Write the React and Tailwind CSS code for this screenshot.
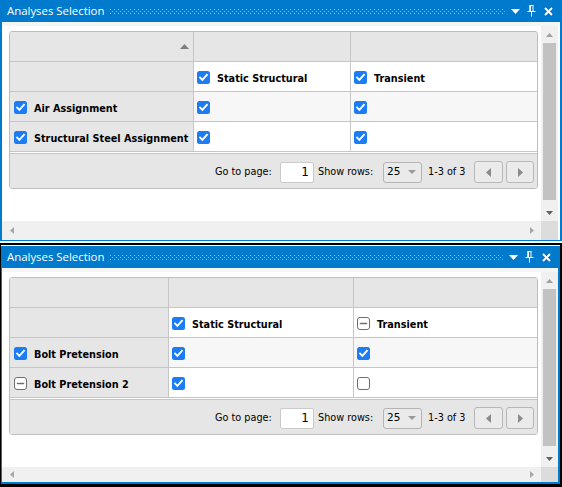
import React from "react";

function Box({ state }) {
  if (state === "on") {
    return (
      <svg width="13" height="13" viewBox="0 0 13 13" className="shrink-0 block">
        <rect x="0" y="0" width="13" height="13" rx="2.5" fill="#1b7cf3" />
        <path d="M3.1 6.6 L5.4 8.9 L9.9 3.9" stroke="#fff" strokeWidth="1.9" fill="none" strokeLinecap="square" />
      </svg>
    );
  }
  if (state === "mixed") {
    return (
      <svg width="13" height="13" viewBox="0 0 13 13" className="shrink-0 block">
        <rect x="0.5" y="0.5" width="12" height="12" rx="2.5" fill="#fff" stroke="#6e6e6e" />
        <path d="M3.5 6.5 H9.5" stroke="#6e6e6e" strokeWidth="1.6" strokeLinecap="round" />
      </svg>
    );
  }
  return (
    <svg width="13" height="13" viewBox="0 0 13 13" className="shrink-0 block">
      <rect x="0.5" y="0.5" width="12" height="12" rx="2.5" fill="#fff" stroke="#6e6e6e" />
    </svg>
  );
}

function TitleBar({ id }) {
  return (
    <div className="h-[22px] bg-[#007acc] flex items-center pl-[5px] pr-[7px]">
      <span className="text-white text-[11.4px] leading-none whitespace-nowrap font-['Open_Sans',sans-serif]">
        Analyses Selection
      </span>
      <div className="flex-1 ml-[6px] mr-[6px] mt-[2px] h-[6px]">
        <svg width="100%" height="6" className="block">
          <defs>
            <pattern id={id} width="4" height="4" patternUnits="userSpaceOnUse">
              <rect x="0" y="0" width="1" height="1" fill="#8cc6f0" />
              <rect x="2" y="2" width="1" height="1" fill="#8cc6f0" />
            </pattern>
          </defs>
          <rect width="100%" height="6" fill={`url(#${id})`} />
        </svg>
      </div>
      <svg width="9" height="5" viewBox="0 0 9 5" className="block mt-[1px]">
        <path d="M0 0 H9 L4.5 5 Z" fill="#fff" />
      </svg>
      <svg width="9" height="12" viewBox="0 0 9 12" className="block ml-[7px]">
        <path d="M2.5 0.5 H6.5 M3 0.5 V6.5 M6 0.5 V6.5 M0.5 6.5 H8.5 M4.5 6.5 V11.5" stroke="#fff" strokeWidth="1" fill="none" />
        <rect x="2.5" y="0.5" width="1.5" height="6" fill="#fff" />
      </svg>
      <svg width="9" height="9" viewBox="0 0 9 9" className="block ml-[8px]">
        <path d="M1 1 L8 8 M8 1 L1 8" stroke="#fff" strokeWidth="1.8" />
      </svg>
    </div>
  );
}

function Grid({ cols, headers, rows, sort }) {
  const cellB = "border-b border-[#c6c6c6]";
  const cellR = "border-r border-[#c6c6c6]";
  return (
    <div className="border border-[#bdbdbd] rounded-[3px] overflow-hidden bg-white font-['DejaVu_Sans',sans-serif] text-black">
      <div className={`grid ${cols}`}>
        <div className={`h-[30px] bg-[#e6e6e6] ${cellB} ${cellR} flex items-center justify-end pr-[4px]`}>
          {sort && (
            <svg width="9" height="5" viewBox="0 0 9 5" className="block">
              <path d="M0 5 H9 L4.5 0 Z" fill="#7f7f7f" />
            </svg>
          )}
        </div>
        <div className={`h-[30px] bg-[#e6e6e6] ${cellB} ${cellR}`} />
        <div className={`h-[30px] bg-[#e6e6e6] ${cellB}`} />
        <div className={`h-[30px] bg-[#e6e6e6] ${cellB} ${cellR}`} />
        {headers.map((h, i) => (
          <div
            key={i}
            className={`h-[30px] bg-white ${cellB} ${i === 0 ? cellR : ""} flex items-center pl-[3px] pt-[1px] gap-[7px]`}
          >
            <Box state={h.state} />
            <span className="text-[9.7px] font-bold whitespace-nowrap pt-[5px]">{h.label}</span>
          </div>
        ))}
        {rows.map((r, ri) => (
          <React.Fragment key={ri}>
            <div className={`h-[30px] bg-[#e6e6e6] ${cellB} ${cellR} flex items-center pl-[4px] pt-[1px] gap-[7px]`}>
              <Box state={r.state} />
              <span className="text-[9.7px] font-bold whitespace-nowrap pt-[5px]">{r.label}</span>
            </div>
            {r.cells.map((c, ci) => (
              <div
                key={ci}
                className={`h-[30px] ${ri === 0 ? "bg-[#f7f7f7]" : "bg-white"} ${cellB} ${ci === 0 ? cellR : ""} flex items-center pl-[3px] pt-[1px]`}
              >
                <Box state={c} />
              </div>
            ))}
          </React.Fragment>
        ))}
      </div>
      <div className="mt-[1px] h-[35px] border-t border-[#c6c6c6] bg-[#e6e6e6] flex items-center justify-end pr-[3px] pt-[2px] text-[9.7px] whitespace-nowrap">
        <span className="w-[59px]">Go to page:</span>
        <div className="ml-[6px] w-[34px] h-[21px] bg-white border border-[#cacaca] rounded-[2px] flex items-center justify-end pr-[4px] text-[12px]">
          1
        </div>
        <span className="ml-[4px] w-[58px]">Show rows:</span>
        <div className="ml-[7px] w-[39px] h-[21px] bg-[#eaeaea] border border-[#b4b4b4] rounded-[3px] flex items-center pl-[3px] text-[10.5px]">
          <span>25</span>
          <svg width="8" height="4" viewBox="0 0 8 4" className="block ml-auto mr-[5px]">
            <path d="M0 0 H8 L4 4 Z" fill="#9a9a9a" />
          </svg>
        </div>
        <span className="ml-[6px] w-[39px]">1-3 of 3</span>
        <div className="ml-[7px] w-[29px] h-[22px] bg-[#ebebeb] border border-[#b8b8b8] rounded-[3px] flex items-center justify-center">
          <svg width="5" height="9" viewBox="0 0 5 9" className="block">
            <path d="M5 0 V9 L0 4.5 Z" fill="#8a8a8a" />
          </svg>
        </div>
        <div className="ml-[3px] w-[28px] h-[22px] bg-[#ebebeb] border border-[#b8b8b8] rounded-[3px] flex items-center justify-center">
          <svg width="5" height="9" viewBox="0 0 5 9" className="block">
            <path d="M0 0 V9 L5 4.5 Z" fill="#8a8a8a" />
          </svg>
        </div>
      </div>
    </div>
  );
}

function Body({ grid, hHeight, rightGap }) {
  return (
    <>
      <div className="h-[4px] bg-[#f5f5f5]" />
      <div className="h-[195px] flex">
        <div className="w-[539px] pl-[7px] pr-[3px] pt-[5px] bg-white">{grid}</div>
        <div className="w-[17px] bg-[#f0f0f0] flex flex-col items-center">
          <div className="h-[17px] flex items-center justify-center">
            <svg width="7" height="4" viewBox="0 0 7 4" className="block">
              <path d="M0 4 H7 L3.5 0 Z" fill="#a0a0a0" />
            </svg>
          </div>
          <div className="w-[13px] h-[157px] bg-[#c2c2c2]" />
          <div className="flex-1" />
          <div className="h-[17px] flex items-center justify-center">
            <svg width="7" height="4" viewBox="0 0 7 4" className="block">
              <path d="M0 0 H7 L3.5 4 Z" fill="#606060" />
            </svg>
          </div>
        </div>
        {rightGap && <div className="w-[2px] bg-white" />}
      </div>
      <div className={`${hHeight} flex`}>
        <div className="w-[539px] bg-[#f0f0f0] flex items-center justify-between pl-[8px] pr-[7px]">
          <svg width="4" height="7" viewBox="0 0 4 7" className="block">
            <path d="M4 0 V7 L0 3.5 Z" fill="#a8a8a8" />
          </svg>
          <svg width="4" height="7" viewBox="0 0 4 7" className="block">
            <path d="M0 0 V7 L4 3.5 Z" fill="#a8a8a8" />
          </svg>
        </div>
        <div className="w-[17px] bg-[#dcdcdc]" />
        {rightGap && <div className="w-[2px] bg-white" />}
      </div>
    </>
  );
}

export default function App() {
  const grid1 = (
    <Grid
      cols="grid-cols-[184px_157px_1fr]"
      sort
      headers={[
        { state: "on", label: "Static Structural" },
        { state: "on", label: "Transient" },
      ]}
      rows={[
        { state: "on", label: "Air Assignment", cells: ["on", "on"] },
        { state: "on", label: "Structural Steel Assignment", cells: ["on", "on"] },
      ]}
    />
  );
  const grid2 = (
    <Grid
      cols="grid-cols-[159px_185px_1fr]"
      headers={[
        { state: "on", label: "Static Structural" },
        { state: "mixed", label: "Transient" },
      ]}
      rows={[
        { state: "on", label: "Bolt Pretension", cells: ["on", "on"] },
        { state: "mixed", label: "Bolt Pretension 2", cells: ["on", "off"] },
      ]}
    />
  );
  return (
    <div className="w-[562px] h-[487px] overflow-hidden bg-white">
      <div className="h-[241px] border-x-2 border-b border-[#007acc] flex flex-col">
        <TitleBar id="dots-a" />
        <Body grid={grid1} hHeight="h-[19px]" rightGap />
      </div>
      <div className="h-[2px] bg-white" />
      <div className="h-[244px] border-t-2 border-l border-r-2 border-b-[3px] border-black bg-white pt-[1px]">
        <div className="h-[238px] border-l border-r-2 border-b-2 border-[#007acc] flex flex-col">
          <TitleBar id="dots-b" />
          <Body grid={grid2} hHeight="h-[15px]" />
        </div>
      </div>
    </div>
  );
}
